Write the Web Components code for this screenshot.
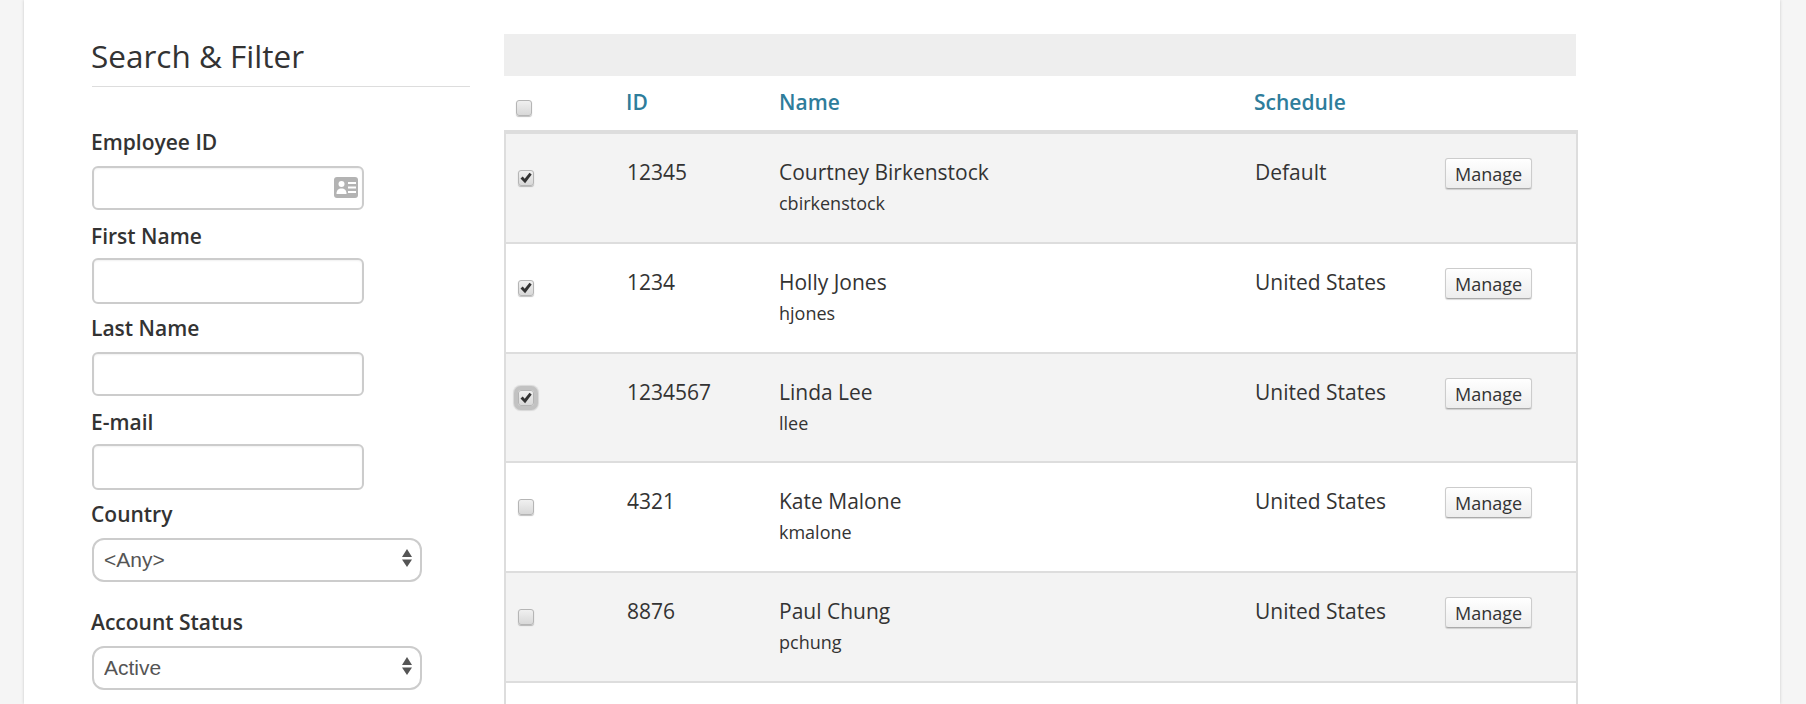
<!DOCTYPE html>
<html lang="en">
<head>
<meta charset="utf-8">
<title>Search &amp; Filter</title>
<style>
html, body { margin: 0; height: 704px; overflow: hidden; background: #f5f5f5; }
body { font-family: "Open Sans", sans-serif; color: #333; }
</style>
</head>
<body>
<app-shell>
  <filter-panel slot="side" heading="Search &amp; Filter">
    <filter-field label="Employee ID" icon></filter-field>
    <filter-field label="First Name"></filter-field>
    <filter-field label="Last Name"></filter-field>
    <filter-field label="E-mail"></filter-field>
    <filter-select label="Country" value="&lt;Any&gt;"></filter-select>
    <filter-select label="Account Status" value="Active"></filter-select>
  </filter-panel>
  <employee-table slot="main">
    <employee-row checked emp="12345" name="Courtney Birkenstock" user="cbirkenstock" schedule="Default"></employee-row>
    <employee-row checked emp="1234" name="Holly Jones" user="hjones" schedule="United States"></employee-row>
    <employee-row checked focused emp="1234567" name="Linda Lee" user="llee" schedule="United States"></employee-row>
    <employee-row emp="4321" name="Kate Malone" user="kmalone" schedule="United States"></employee-row>
    <employee-row emp="8876" name="Paul Chung" user="pchung" schedule="United States"></employee-row>
    <employee-row></employee-row>
  </employee-table>
</app-shell>

<script>
"use strict";

/* AppShell is the white sheet holding the sidebar and the table. */
class AppShell extends HTMLElement {
    constructor () {
        super();
        this.attachShadow({mode: 'open'}).innerHTML = `
<style>
:host { display: block; margin: 0 26px 0 24px; height: 704px; overflow: hidden; background: #fff; box-shadow: 0 0 3px rgba(0,0,0,.18); }
.cols { display: flex; align-items: flex-start; gap: 34px; padding: 34px 0 0 68px; }
.side { display: block; width: 378px; flex: none; }
.main { display: block; width: 1074px; flex: none; }
</style>
<div class="cols">
  <div class="side"><slot name="side"></slot></div>
  <div class="main"><slot name="main"></slot></div>
</div>`;
    }
}

class FilterPanel extends HTMLElement {
    constructor () {
        super();
        this.attachShadow({mode: 'open'}).innerHTML = `
<style>
:host { display: block; }
h2 { margin: 0 0 41px; padding-bottom: 7px; height: 45px; text-indent: -1px; font: 400 31.500px/44px "Open Sans", sans-serif; color: #333; border-bottom: 1px solid #ddd; }
</style>
<h2></h2>
<slot></slot>`;
    }

    connectedCallback() {
        this.shadowRoot.querySelector('h2').textContent = this.getAttribute('heading');
    }
}

class FilterField extends HTMLElement {
    constructor () {
        super();
        this.attachShadow({mode: 'open'}).innerHTML = `
<style>
:host { display: block; margin-bottom: 11px; }
:host(:nth-of-type(even)) { margin-bottom: 10.500px; }
label { display: block; font: 600 21px/28px "Open Sans", sans-serif; text-indent: -1px; color: #333; margin-bottom: 10px; }
:host(:nth-of-type(even)) label { padding-top: 1px; margin-bottom: 8px; }
.box { position: relative; width: 272px; height: 44px; }
:host(:nth-of-type(even)) .box { height: 45.500px; }
input { display: block; box-sizing: border-box; width: 100%; height: 100%; margin: 0; padding: 0 12px; background: #fff; border: 2px solid #ccc; border-radius: 6px; outline: none; box-shadow: inset 0 1px 2px rgba(0,0,0,.06); font: 16px "Open Sans", sans-serif; }
svg { position: absolute; right: 6px; top: 11px; width: 24px; height: 21px; display: none; }
:host([icon]) svg { display: block; }
</style>
<label for="f"></label>
<div class="box">
  <input id="f" type="text">
  <svg viewBox="0 0 24 21"><rect width="24" height="21" rx="3" fill="#b3b3b3"/><circle cx="7.500" cy="7" r="3" fill="#fff"/><path d="M2.500 17c0-4 2-5.500 5-5.500s5 1.500 5 5.500z" fill="#fff"/><path d="M14 5h8v2h-8zM14 9.500h8v2h-8zM14 14h8v2h-8z" fill="#fff"/></svg>
</div>`;
    }

    connectedCallback() {
        this.shadowRoot.querySelector('label').textContent = this.getAttribute('label');
    }
}

class FilterSelect extends HTMLElement {
    constructor () {
        super();
        this.attachShadow({mode: 'open'}).innerHTML = `
<style>
:host { display: block; margin-bottom: 26.500px; }
label { display: block; font: 600 21px/28px "Open Sans", sans-serif; text-indent: -1px; color: #333; margin-bottom: 10px; }
.box { position: relative; width: 330px; height: 43.500px; }
select { display: block; box-sizing: border-box; width: 100%; height: 100%; margin: 0; padding: 0 0 0 10px; appearance: none; -webkit-appearance: none; background: #fff; border: 2px solid #ccc; border-radius: 12px; outline: none; font: 21px "Liberation Sans", Arial, sans-serif; color: #555; }
svg { position: absolute; right: 10px; top: 11px; width: 10px; height: 18px; pointer-events: none; }
</style>
<label for="s"></label>
<div class="box">
  <select id="s"></select>
  <svg viewBox="0 0 10 18"><path d="M5 0l5 8H0zM0 10.500h10L5 18z" fill="#555"/></svg>
</div>`;
    }

    connectedCallback() {
        this.shadowRoot.querySelector('label').textContent = this.getAttribute('label');
        let option = document.createElement('option');
        option.textContent = this.getAttribute('value');
        this.shadowRoot.querySelector('select').appendChild(option);
    }
}

class CheckMark extends HTMLElement {
    constructor () {
        super();
        this.attachShadow({mode: 'open'}).innerHTML = `
<style>
:host { display: block; box-sizing: border-box; width: 16px; height: 16px; border: 1px solid #b5b5b5; border-radius: 3px; background: linear-gradient(#f0f0f0, #d8d8d8); box-shadow: 0 1px 1px rgba(0,0,0,.25); position: relative; }
:host([focused]) { box-shadow: 0 0 0 4px #c2c2c2, 0 0 1px 5px #d8d8d8; }
svg { display: none; position: absolute; left: 1px; top: 1px; width: 12px; height: 12px; }
:host([checked]) svg { display: block; }
</style>
<svg viewBox="0 0 12 12"><path d="M.500 6.500l2.200-2 2 2.200L9.500.800l2.200 1.700-6.600 8.800z" fill="#333"/></svg>`;
    }
}

class EmployeeTable extends HTMLElement {
    constructor () {
        super();
        this.attachShadow({mode: 'open'}).innerHTML = `
<style>
:host { display: block; }
.bar { height: 42px; width: 1072px; background: #eee; }
.head { display: grid; grid-template-columns: 122px 153px 475px 1fr; box-sizing: border-box; height: 58px; padding-top: 12px; border-bottom: 4px solid #ddd; }
.head span { font: 600 21px/28px "Open Sans", sans-serif; color: #2e7d9b; }
check-mark { margin: 12px 0 0 12px; }
.rows { border: solid #ddd; border-width: 0 2px; }
</style>
<div class="bar"></div>
<div class="head">
  <div><check-mark></check-mark></div>
  <span>ID</span><span>Name</span><span>Schedule</span>
</div>
<div class="rows"><slot></slot></div>`;
    }
}

class EmployeeRow extends HTMLElement {
    constructor () {
        super();
        this.attachShadow({mode: 'open'}).innerHTML = `
<style>
:host { display: grid; grid-template-columns: 121px 152px 476px 189px 1fr; align-items: start; box-sizing: border-box; height: 109.750px; padding-top: 24px; border-bottom: 2px solid #ddd; background: #fff; font: 400 21px/28px "Open Sans", sans-serif; color: #333; }
:host(:nth-of-type(odd)) { background: #f3f3f3; }
check-mark { margin: 12px 0 0 12px; }
small { display: block; font-size: 18px; line-height: 34px; }
button { box-sizing: border-box; width: 87px; height: 31px; margin: 0 0 0 1px; padding: 2px 0 0; border: 1px solid #ccc; border-bottom-color: #aaa; border-radius: 3px; background: linear-gradient(#fff, #ededed); box-shadow: 0 1px 1px rgba(0,0,0,.15); font: 400 18px/25px "Open Sans", sans-serif; color: #333; }
</style>
<div class="cb"></div>
<div class="emp"></div>
<div><span class="name"></span><small></small></div>
<div class="schedule"></div>
<div class="act"></div>`;
    }

    connectedCallback() {
        let root = this.shadowRoot;
        if (!this.hasAttribute('emp')) return;
        let mark = document.createElement('check-mark');
        if (this.hasAttribute('checked')) mark.setAttribute('checked', '');
        if (this.hasAttribute('focused')) mark.setAttribute('focused', '');
        root.querySelector('.cb').appendChild(mark);
        root.querySelector('.emp').textContent = this.getAttribute('emp');
        root.querySelector('.name').textContent = this.getAttribute('name');
        root.querySelector('small').textContent = this.getAttribute('user');
        root.querySelector('.schedule').textContent = this.getAttribute('schedule');
        let btn = document.createElement('button');
        btn.textContent = 'Manage';
        root.querySelector('.act').appendChild(btn);
    }
}

window.customElements.define('check-mark', CheckMark);
window.customElements.define('filter-field', FilterField);
window.customElements.define('filter-select', FilterSelect);
window.customElements.define('filter-panel', FilterPanel);
window.customElements.define('employee-row', EmployeeRow);
window.customElements.define('employee-table', EmployeeTable);
window.customElements.define('app-shell', AppShell);
</script>
</body>
</html>
